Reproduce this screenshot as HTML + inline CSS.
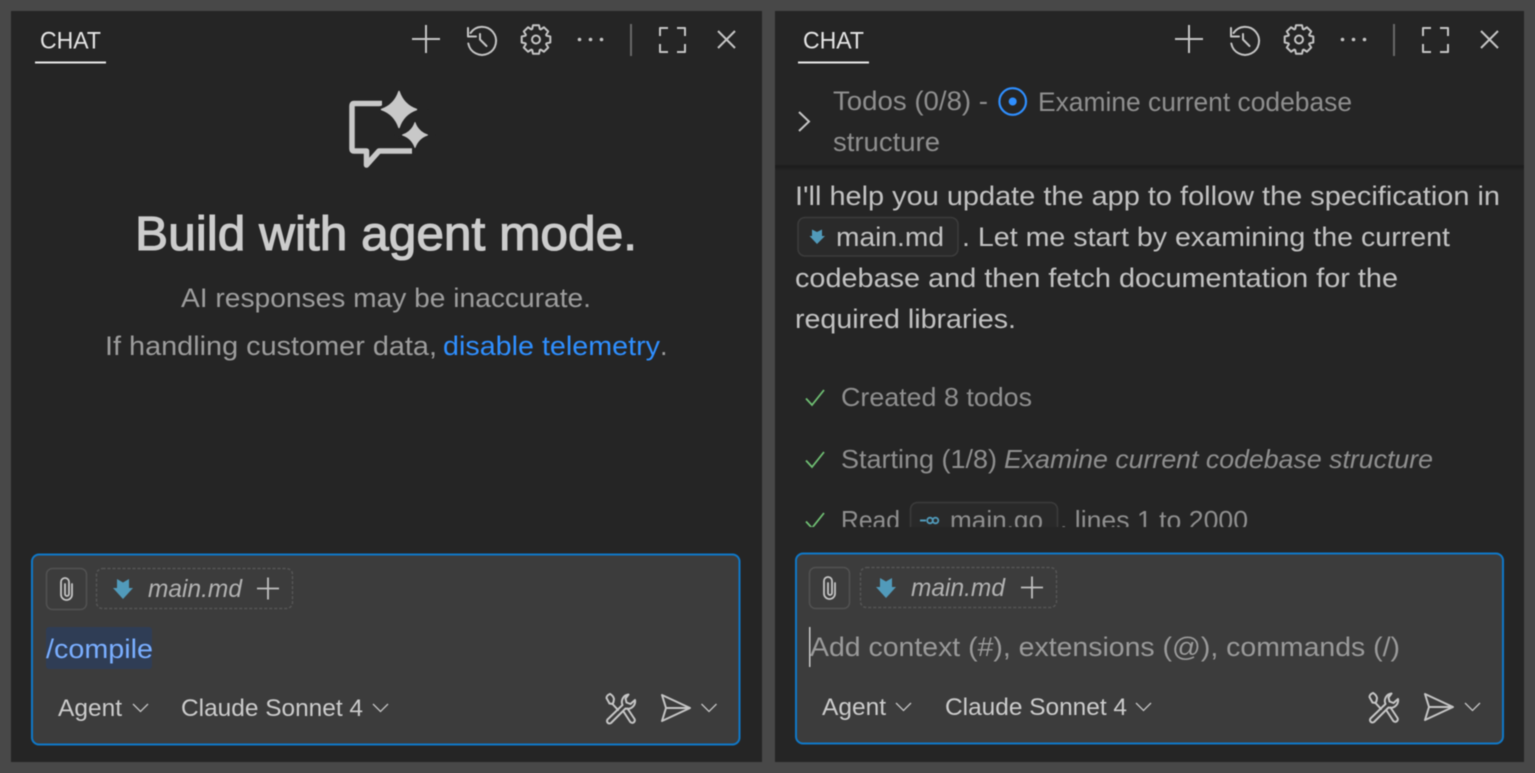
<!DOCTYPE html>
<html>
<head>
<meta charset="utf-8">
<style>
html,body{margin:0;padding:0;background:#484848;width:1535px;height:773px;overflow:hidden}
svg{display:block;filter:blur(.4px)}
text{font-family:"Liberation Sans",sans-serif;white-space:pre}
</style>
</head>
<body>
<svg width="1535" height="773" viewBox="0 0 1535 773" xmlns="http://www.w3.org/2000/svg">
<defs>
<clipPath id="listclip"><rect x="775" y="480" width="749" height="47"/></clipPath>
<g id="toolbar" fill="none" stroke="#c5c5c5" stroke-width="2" stroke-linejoin="round">
  <path d="M412 39H440M426 25V53"/>
  <path d="M470.500 33A14 14 0 1 1 468.300 43.500M468 28V36.500H476" stroke-linecap="round"/>
  <path d="M480 34V39.500L486.500 46" stroke-linecap="round"/>
  <g transform="translate(536 39.500)">
    <path d="M-3.800-10.500L-3-14.300L3-14.300L3.800-10.500L4.740-10.110L7.990-12.230L12.230-7.990L10.110-4.740L10.500-3.800L14.300-3L14.300 3L10.500 3.800L10.110 4.740L12.230 7.990L7.990 12.230L4.740 10.110L3.800 10.500L3 14.300L-3 14.300L-3.800 10.500L-4.740 10.110L-7.990 12.230L-12.230 7.990L-10.110 4.740L-10.500 3.800L-14.300 3L-14.300-3L-10.500-3.800L-10.110-4.740L-12.230-7.990L-7.990-12.230L-4.740-10.110Z"/>
    <circle r="4"/>
  </g>
  <g fill="#c5c5c5" stroke="none"><circle cx="579.500" cy="39.500" r="1.800"/><circle cx="590.500" cy="39.500" r="1.800"/><circle cx="601.500" cy="39.500" r="1.800"/></g>
  <path d="M631 24V56" stroke="#686868" stroke-width="2"/>
  <path d="M660 36V28H668M677 28H685V36M685 44V52H677M668 52H660V44"/>
  <path d="M718 31L735 48M735 31L718 48"/>
</g>
<g id="md">
  <path d="M117 579L123 582.500L129 579V588H133L123 599L113 588H117Z" fill="#519aba"/>
</g>
<g id="clip" fill="none" stroke="#c5c5c5" stroke-width="1.800" stroke-linecap="round">
  <path d="M72 584V594.500A5.500 5.500 0 0 1 61 594.500V582A4 4 0 0 1 69 582V594A2 2 0 0 1 65 594V584"/>
</g>
<g id="tools" fill="none" stroke="#c5c5c5" stroke-width="2" stroke-linejoin="round" stroke-linecap="round">
  <path d="M628.500 694.500A7.500 7.500 0 0 0 622.500 705L607.500 719.500A2.500 2.500 0 0 0 611 723L625.500 708.500A7.500 7.500 0 0 0 635 700L630.500 704L626.500 702.500L625.500 698.500Z"/>
  <path d="M610 694C607.500 695 606.500 696.500 606.500 698L609.500 703.500L612.500 704L618 710"/>
  <path d="M610 694C612 695 613.500 697 614 699L613.500 702L612.500 704"/>
  <path d="M623.500 711.500L630 721.500A2.500 2.500 0 0 0 634.500 719L627.500 708.500"/>
</g>
<g id="send" fill="none" stroke="#c5c5c5" stroke-width="2" stroke-linejoin="round">
  <path d="M662 695L690 708L662 721L666 708ZM666 708H690"/>
</g>
</defs>

<rect width="1535" height="773" fill="#484848"/>

<!-- LEFT PANEL -->
<rect x="11" y="11" width="751" height="751" fill="#252525"/>
<text x="40" y="48.500" font-size="24.500" fill="#e4e4e4" textLength="61" lengthAdjust="spacingAndGlyphs">CHAT</text>
<rect x="35" y="61.500" width="71" height="2" fill="#e8e8e8"/>
<use href="#toolbar"/>

<g>
  <path d="M382 103.500H354Q352 103.500 352 106V149Q352 151 354 151H366.500V165L379 151H412" fill="none" stroke="#c8c8c8" stroke-width="5.500" stroke-linejoin="round"/>
  <path d="M399 89Q403.500 105 420 109.500Q403.500 114 399 130Q394.500 114 378 109.500Q394.500 105 399 89Z" fill="#252525" stroke="#252525" stroke-width="5"/>
  <path d="M415 120Q418.500 131.500 431 135Q418.500 138.500 415 150Q411.500 138.500 399 135Q411.500 131.500 415 120Z" fill="#252525" stroke="#252525" stroke-width="3"/>
  <path d="M399 91.500Q403.500 105 416.500 109.500Q403.500 114 399 127.500Q394.500 114 381.500 109.500Q394.500 105 399 91.500Z" fill="#c8c8c8" stroke="#c8c8c8" stroke-width="1.500" stroke-linejoin="round"/>
  <path d="M415 122.500Q418.200 131.800 427.500 135Q418.200 138.200 415 147.500Q411.800 138.200 402.500 135Q411.800 131.800 415 122.500Z" fill="#c8c8c8" stroke="#c8c8c8" stroke-width="1" stroke-linejoin="round"/>
</g>

<text x="135" y="250" font-size="48" fill="#cccccc" stroke="#cccccc" stroke-width="1.100" textLength="502" lengthAdjust="spacingAndGlyphs">Build with agent mode.</text>
<text x="181" y="307" font-size="27" fill="#9d9d9d" textLength="410" lengthAdjust="spacingAndGlyphs">AI responses may be inaccurate.</text>
<text x="105" y="355" font-size="27" fill="#9d9d9d" textLength="332" lengthAdjust="spacingAndGlyphs">If handling customer data,</text>
<text x="443" y="355" font-size="27" fill="#2f8fff" textLength="217" lengthAdjust="spacingAndGlyphs">disable telemetry</text>
<text x="660" y="355" font-size="27" fill="#9d9d9d">.</text>

<!-- LEFT INPUT -->
<rect x="32" y="554.500" width="707.500" height="190" rx="7" fill="#3c3c3c" stroke="#0f78c8" stroke-width="2"/>
<rect x="46.500" y="568.500" width="40" height="41" rx="6" fill="none" stroke="#525252" stroke-width="1.500"/>
<use href="#clip"/>
<rect x="96.500" y="568.500" width="196" height="40" rx="6" fill="none" stroke="#555555" stroke-width="1.500" stroke-dasharray="3 2"/>
<use href="#md"/>
<text x="148" y="597" font-size="25" font-style="italic" fill="#b2b2b2" textLength="94" lengthAdjust="spacingAndGlyphs">main.md</text>
<path d="M257 588.500H279M268 577.500V599.500" stroke="#c0c0c0" stroke-width="1.800" fill="none"/>
<rect x="46" y="627" width="106" height="42" rx="3" fill="#2f3d55"/>
<text x="46" y="658" font-size="27" fill="#7aaeff" textLength="107" lengthAdjust="spacingAndGlyphs">/compile</text>
<text x="58" y="716" font-size="24" fill="#cccccc" textLength="64" lengthAdjust="spacingAndGlyphs">Agent</text>
<path d="M133 704L140.500 711.500L148 704" fill="none" stroke="#c5c5c5" stroke-width="1.300"/>
<text x="181" y="716" font-size="24" fill="#cccccc" textLength="182" lengthAdjust="spacingAndGlyphs">Claude Sonnet 4</text>
<path d="M373 704L380.500 711.500L388 704" fill="none" stroke="#c5c5c5" stroke-width="1.300"/>
<use href="#tools"/>
<use href="#send"/>
<path d="M701.500 704L709 711.500L716.500 704" fill="none" stroke="#c5c5c5" stroke-width="1.300"/>

<!-- RIGHT PANEL -->
<rect x="775" y="11" width="749" height="751" fill="#252525"/>
<text x="803" y="48.500" font-size="24.500" fill="#e4e4e4" textLength="61" lengthAdjust="spacingAndGlyphs">CHAT</text>
<rect x="798" y="61.500" width="71" height="2" fill="#e8e8e8"/>
<use href="#toolbar" x="763"/>

<path d="M799 112L809 121.500L799 131" fill="none" stroke="#c5c5c5" stroke-width="2"/>
<text x="833" y="110" font-size="26.500" fill="#8f8f8f" textLength="155" lengthAdjust="spacingAndGlyphs">Todos (0/8) -</text>
<circle cx="1012.700" cy="101.500" r="13.300" fill="none" stroke="#2f8fff" stroke-width="2.200"/>
<circle cx="1012.700" cy="101.500" r="4" fill="#2f8fff"/>
<text x="1038" y="111" font-size="26.500" fill="#8f8f8f" textLength="314" lengthAdjust="spacingAndGlyphs">Examine current codebase</text>
<text x="833" y="151" font-size="26.500" fill="#8f8f8f" textLength="107" lengthAdjust="spacingAndGlyphs">structure</text>
<rect x="775" y="165" width="749" height="3" fill="#1d1d1d"/>
<rect x="775" y="168" width="749" height="2" fill="#212121"/>

<text x="795" y="205" font-size="27" fill="#c2c2c2" textLength="705" lengthAdjust="spacingAndGlyphs">I'll help you update the app to follow the specification in</text>
<rect x="798" y="217.500" width="160" height="38.500" rx="7" fill="#2a2a2a" stroke="#3c3c3c" stroke-width="1.500"/>
<path d="M812 229.500L817 232L822 229.500V236H825L817 244L809.500 236H812Z" fill="#519aba"/>
<text x="836" y="246" font-size="27" fill="#c2c2c2" textLength="108" lengthAdjust="spacingAndGlyphs">main.md</text>
<text x="962" y="246" font-size="27" fill="#c2c2c2" textLength="488" lengthAdjust="spacingAndGlyphs">. Let me start by examining the current</text>
<text x="795" y="287" font-size="27" fill="#c2c2c2" textLength="603" lengthAdjust="spacingAndGlyphs">codebase and then fetch documentation for the</text>
<text x="795" y="328" font-size="27" fill="#c2c2c2" textLength="221" lengthAdjust="spacingAndGlyphs">required libraries.</text>

<path d="M806 398.500L812 405L824 390" fill="none" stroke="#6fbf73" stroke-width="1.800"/>
<text x="841" y="406" font-size="26" fill="#8f8f8f" textLength="191" lengthAdjust="spacingAndGlyphs">Created 8 todos</text>
<path d="M806 460.500L812 467L824 452" fill="none" stroke="#6fbf73" stroke-width="1.800"/>
<text x="841" y="468" font-size="26" fill="#8f8f8f" textLength="156" lengthAdjust="spacingAndGlyphs">Starting (1/8)</text>
<text x="1004" y="468" font-size="26" font-style="italic" fill="#8f8f8f" textLength="429" lengthAdjust="spacingAndGlyphs">Examine current codebase structure</text>
<g clip-path="url(#listclip)">
  <path d="M806 521.500L812 528L824 513" fill="none" stroke="#6fbf73" stroke-width="1.800"/>
  <text x="841" y="529" font-size="26" fill="#8f8f8f" textLength="59" lengthAdjust="spacingAndGlyphs">Read</text>
  <rect x="910.500" y="502.500" width="147" height="40" rx="7" fill="#292929" stroke="#3c3c3c" stroke-width="1.500"/>
  <path d="M920 520.500H926" stroke="#519aba" stroke-width="2"/>
  <circle cx="930" cy="520.500" r="2.800" fill="none" stroke="#519aba" stroke-width="1.800"/>
  <circle cx="935.500" cy="520.500" r="2.800" fill="none" stroke="#519aba" stroke-width="1.800"/>
  <text x="950" y="529" font-size="26" fill="#8f8f8f" textLength="93" lengthAdjust="spacingAndGlyphs">main.go</text>
  <text x="1060" y="529" font-size="26" fill="#8f8f8f" textLength="188" lengthAdjust="spacingAndGlyphs">. lines 1 to 2000</text>
</g>

<!-- RIGHT INPUT -->
<rect x="796" y="553.500" width="707" height="190" rx="7" fill="#3c3c3c" stroke="#0f78c8" stroke-width="2"/>
<rect x="809.500" y="567.500" width="40" height="41" rx="6" fill="none" stroke="#525252" stroke-width="1.500"/>
<use href="#clip" x="763" y="-1"/>
<rect x="860.500" y="567.500" width="196" height="40" rx="6" fill="none" stroke="#555555" stroke-width="1.500" stroke-dasharray="3 2"/>
<use href="#md" x="763" y="-1"/>
<text x="911" y="596" font-size="25" font-style="italic" fill="#b2b2b2" textLength="94" lengthAdjust="spacingAndGlyphs">main.md</text>
<path d="M1021 587.500H1043M1032 576.500V598.500" stroke="#c0c0c0" stroke-width="1.800" fill="none"/>
<rect x="809" y="627" width="1.500" height="40" fill="#c8c8c8"/>
<text x="810" y="656" font-size="27" fill="#9a9a9a" textLength="590" lengthAdjust="spacingAndGlyphs">Add context (#), extensions (@), commands (/)</text>
<text x="822" y="715" font-size="24" fill="#cccccc" textLength="64" lengthAdjust="spacingAndGlyphs">Agent</text>
<path d="M896 703L903.500 710.500L911 703" fill="none" stroke="#c5c5c5" stroke-width="1.300"/>
<text x="945" y="715" font-size="24" fill="#cccccc" textLength="182" lengthAdjust="spacingAndGlyphs">Claude Sonnet 4</text>
<path d="M1136 703L1143.500 710.500L1151 703" fill="none" stroke="#c5c5c5" stroke-width="1.300"/>
<use href="#tools" x="763" y="-1"/>
<use href="#send" x="763" y="-1"/>
<path d="M1465 703L1472.500 710.500L1480 703" fill="none" stroke="#c5c5c5" stroke-width="1.300"/>
</svg>
</body>
</html>
